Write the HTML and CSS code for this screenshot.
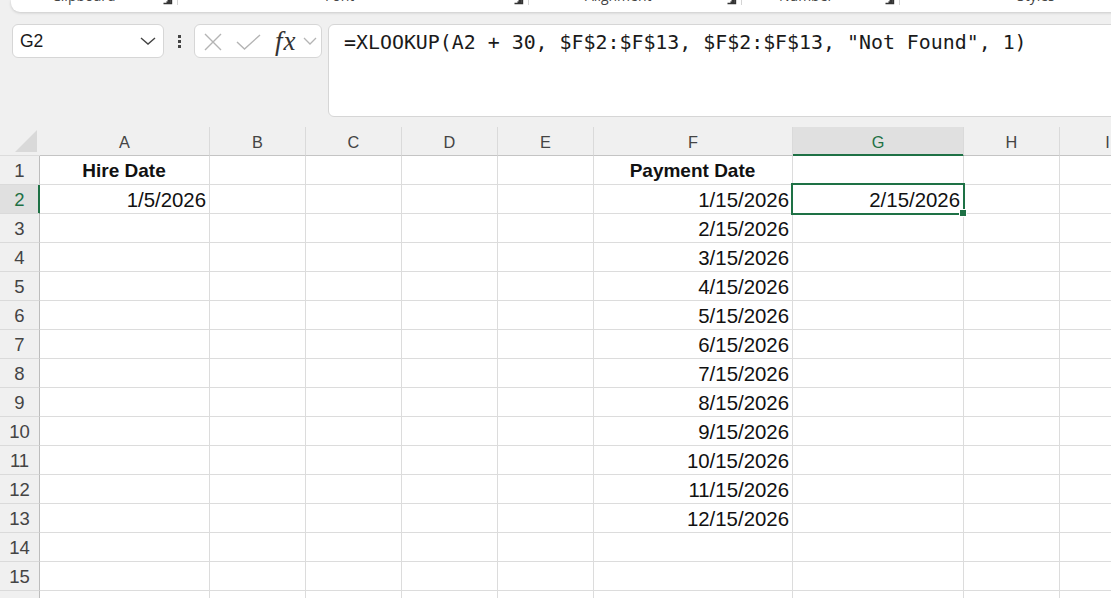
FILE: index.html
```html
<!DOCTYPE html>
<html lang="en">
<head>
<meta charset="utf-8">
<title>Workbook</title>
<link rel="stylesheet" href="styles.css">
</head>
<body>
<div class="ribbon">
  <div class="group g1"><span class="glabel">Clipboard</span><svg class="launch" viewBox="0 0 11 11"><path d="M1.5 9.5H9.5V1.5M3 3L8 8M8 4.5V8H4.5"/></svg></div>
  <div class="group g2"><span class="glabel">Font</span><svg class="launch" viewBox="0 0 11 11"><path d="M1.5 9.5H9.5V1.5M3 3L8 8M8 4.5V8H4.5"/></svg></div>
  <div class="group g3"><span class="glabel">Alignment</span><svg class="launch" viewBox="0 0 11 11"><path d="M1.5 9.5H9.5V1.5M3 3L8 8M8 4.5V8H4.5"/></svg></div>
  <div class="group g4"><span class="glabel">Number</span><svg class="launch" viewBox="0 0 11 11"><path d="M1.5 9.5H9.5V1.5M3 3L8 8M8 4.5V8H4.5"/></svg></div>
  <div class="group g5"><span class="glabel">Styles</span></div>
</div>

<div class="fbar">
  <div class="namebox">
    <span class="nb-text">G2</span>
    <svg class="nb-chev" viewBox="0 0 16 8"><path d="M1 1L8 7L15 1"/></svg>
  </div>
  <div class="more"><i></i><i></i><i></i></div>
  <div class="fnbox">
    <svg class="ic-x" viewBox="0 0 18 18"><path d="M1 1L17 17M17 1L1 17"/></svg>
    <svg class="ic-ok" viewBox="0 0 25 16"><path d="M1 8L8.5 15L24 1"/></svg>
    <span class="fx">fx</span>
    <svg class="ic-chev" viewBox="0 0 14 8"><path d="M1 1L7 7L13 1"/></svg>
  </div>
  <div class="formula">=XLOOKUP(A2 + 30, $F$2:$F$13, $F$2:$F$13, "Not Found", 1)</div>
</div>

<div class="sheet">
  <div class="corner"><svg viewBox="0 0 22 22"><path d="M22 0V22H0Z"/></svg></div>
  <div class="ch">A</div><div class="ch">B</div><div class="ch">C</div><div class="ch">D</div><div class="ch">E</div><div class="ch">F</div><div class="ch ch-sel">G</div><div class="ch">H</div><div class="ch">I</div>

  <div class="rh">1</div><div class="c b">Hire Date</div><div class="c"></div><div class="c"></div><div class="c"></div><div class="c"></div><div class="c b">Payment Date</div><div class="c"></div><div class="c"></div><div class="c"></div>
  <div class="rh rh-sel">2</div><div class="c r">1/5/2026</div><div class="c"></div><div class="c"></div><div class="c"></div><div class="c"></div><div class="c r">1/15/2026</div><div class="c r sel">2/15/2026<span class="handle"></span></div><div class="c"></div><div class="c"></div>
  <div class="rh">3</div><div class="c"></div><div class="c"></div><div class="c"></div><div class="c"></div><div class="c"></div><div class="c r">2/15/2026</div><div class="c"></div><div class="c"></div><div class="c"></div>
  <div class="rh">4</div><div class="c"></div><div class="c"></div><div class="c"></div><div class="c"></div><div class="c"></div><div class="c r">3/15/2026</div><div class="c"></div><div class="c"></div><div class="c"></div>
  <div class="rh">5</div><div class="c"></div><div class="c"></div><div class="c"></div><div class="c"></div><div class="c"></div><div class="c r">4/15/2026</div><div class="c"></div><div class="c"></div><div class="c"></div>
  <div class="rh">6</div><div class="c"></div><div class="c"></div><div class="c"></div><div class="c"></div><div class="c"></div><div class="c r">5/15/2026</div><div class="c"></div><div class="c"></div><div class="c"></div>
  <div class="rh">7</div><div class="c"></div><div class="c"></div><div class="c"></div><div class="c"></div><div class="c"></div><div class="c r">6/15/2026</div><div class="c"></div><div class="c"></div><div class="c"></div>
  <div class="rh">8</div><div class="c"></div><div class="c"></div><div class="c"></div><div class="c"></div><div class="c"></div><div class="c r">7/15/2026</div><div class="c"></div><div class="c"></div><div class="c"></div>
  <div class="rh">9</div><div class="c"></div><div class="c"></div><div class="c"></div><div class="c"></div><div class="c"></div><div class="c r">8/15/2026</div><div class="c"></div><div class="c"></div><div class="c"></div>
  <div class="rh">10</div><div class="c"></div><div class="c"></div><div class="c"></div><div class="c"></div><div class="c"></div><div class="c r">9/15/2026</div><div class="c"></div><div class="c"></div><div class="c"></div>
  <div class="rh">11</div><div class="c"></div><div class="c"></div><div class="c"></div><div class="c"></div><div class="c"></div><div class="c r">10/15/2026</div><div class="c"></div><div class="c"></div><div class="c"></div>
  <div class="rh">12</div><div class="c"></div><div class="c"></div><div class="c"></div><div class="c"></div><div class="c"></div><div class="c r">11/15/2026</div><div class="c"></div><div class="c"></div><div class="c"></div>
  <div class="rh">13</div><div class="c"></div><div class="c"></div><div class="c"></div><div class="c"></div><div class="c"></div><div class="c r">12/15/2026</div><div class="c"></div><div class="c"></div><div class="c"></div>
  <div class="rh">14</div><div class="c"></div><div class="c"></div><div class="c"></div><div class="c"></div><div class="c"></div><div class="c"></div><div class="c"></div><div class="c"></div><div class="c"></div>
  <div class="rh">15</div><div class="c"></div><div class="c"></div><div class="c"></div><div class="c"></div><div class="c"></div><div class="c"></div><div class="c"></div><div class="c"></div><div class="c"></div>
  <div class="rh">16</div><div class="c"></div><div class="c"></div><div class="c"></div><div class="c"></div><div class="c"></div><div class="c"></div><div class="c"></div><div class="c"></div><div class="c"></div>
</div>
</body>
</html>
```

FILE: styles.css
```css
html, body {
  margin: 0;
  padding: 0;
  overflow: hidden;
}
body {
  width: 1111px;
  height: 598px;
  background: #f0f0f0;
  font-family: "Liberation Sans", Arial, sans-serif;
  color: #111;
}

/* ribbon remnant */
.ribbon {
  display: flex;
  width: 1200px;
  height: 12px;
  margin-left: 11px;
  background: #fff;
  border-radius: 0 0 0 9px;
  box-shadow: 0 1px 3px rgba(0, 0, 0, 0.16);
  overflow: hidden;
}
.group {
  display: flex;
  align-items: flex-start;
  flex-shrink: 0;
  height: 5px;
  box-sizing: border-box;
  border-right: 1px solid #d4d4d4;
}
.g1 { width: 167px; }
.g2 { width: 351px; }
.g3 { width: 213px; }
.g4 { width: 158px; }
.g5 { width: 300px; border-right: 0; }
.glabel {
  font-family: "Open Sans", "Liberation Sans", sans-serif;
  font-size: 14px;
  line-height: 14px;
  margin-top: -11px;
  color: #444;
  white-space: nowrap;
}
.g1 .glabel { margin-left: 41px; }
.g2 .glabel { margin-left: 147px; }
.g3 .glabel { margin-left: 56px; }
.g4 .glabel { margin-left: 37px; }
.g5 .glabel { margin-left: 117px; }
.launch {
  width: 11px;
  height: 11px;
  margin-top: -6px;
  margin-left: auto;
  margin-right: 4px;
  fill: none;
  stroke: #333;
  stroke-width: 1.4;
}

/* formula bar */
.fbar {
  display: flex;
  align-items: flex-start;
  padding-top: 12px;
}
.namebox {
  display: flex;
  align-items: center;
  flex-shrink: 0;
  box-sizing: border-box;
  width: 152px;
  height: 34px;
  margin-left: 12px;
  padding: 0 7px 0 7px;
  background: #fff;
  border: 1px solid #d6d6d6;
  border-radius: 6px;
}
.nb-text {
  font-size: 17.5px;
  color: #1a1a1a;
}
.nb-chev {
  width: 16px;
  height: 8px;
  margin-left: auto;
  fill: none;
  stroke: #444;
  stroke-width: 1.4;
}
.more {
  display: flex;
  flex-direction: column;
  align-items: center;
  gap: 2px;
  width: 30px;
  margin-top: 11px;
  flex-shrink: 0;
}
.more i {
  display: block;
  width: 3px;
  height: 3px;
  background: #444;
}
.fnbox {
  display: flex;
  align-items: center;
  flex-shrink: 0;
  box-sizing: border-box;
  width: 128px;
  height: 34px;
  background: #fff;
  border: 1px solid #d6d6d6;
  border-radius: 6px;
}
.ic-x {
  width: 18px;
  height: 18px;
  margin-left: 9px;
  margin-top: 2px;
  fill: none;
  stroke: #b4b4b4;
  stroke-width: 1.4;
}
.ic-ok {
  width: 25px;
  height: 16px;
  margin-left: 14px;
  margin-top: 2px;
  fill: none;
  stroke: #b4b4b4;
  stroke-width: 1.4;
}
.fx {
  margin-left: 14px;
  font-family: "Liberation Serif", "DejaVu Serif", serif;
  font-style: italic;
  font-size: 27px;
  letter-spacing: 1px;
  line-height: 26px;
  color: #333;
}
.ic-chev {
  width: 14px;
  height: 8px;
  margin-left: 6px;
  fill: none;
  stroke: #b4b4b4;
  stroke-width: 1.3;
}
.formula {
  flex-shrink: 0;
  box-sizing: border-box;
  width: 820px;
  height: 93px;
  margin-left: 6px;
  padding: 6px 0 0 15px;
  background: #fff;
  border: 1px solid #d6d6d6;
  border-radius: 6px;
  font-family: "DejaVu Sans Mono", "Liberation Mono", monospace;
  font-size: 19.9px;
  line-height: 24px;
  color: #1a1a1a;
  white-space: pre;
}

/* sheet grid */
.sheet {
  display: grid;
  grid-template-columns: 40px 170px 96px 96px 96px 96px 199px 171px 96px 96px;
  grid-auto-rows: 29px;
  margin-top: 10px;
  width: 1156px;
}
.sheet > div {
  box-sizing: border-box;
}
.corner {
  display: flex;
  align-items: flex-end;
  justify-content: flex-end;
  padding: 0 3px 3px 0;
  background: #f0f0f0;
  border-bottom: 1px solid #dcdcdc;
}
.corner svg {
  width: 22px;
  height: 22px;
  fill: #d9d9d9;
}
.ch {
  padding-top: 2px;
  background: #f0f0f0;
  border-right: 1px solid #dadada;
  border-bottom: 1px solid #c4c4c4;
  font-size: 16.3px;
  line-height: 26px;
  text-align: center;
  color: #444;
}
.ch-sel {
  background: #e0e0e0;
  color: #1e7145;
  border-bottom-color: #1e7145;
  box-shadow: inset 0 -1px 0 #1e7145;
}
.rh {
  padding-top: 1px;
  background: #f0f0f0;
  border-right: 1px solid #bdbdbd;
  border-bottom: 1px solid #dadada;
  font-size: 18.5px;
  line-height: 27px;
  text-align: center;
  color: #444;
}
.rh-sel {
  background: #e0e0e0;
  color: #1e7145;
  border-right-color: #1e7145;
  box-shadow: inset -1px 0 0 #1e7145;
}
.c {
  padding: 1px 3px 0 2px;
  background: #fff;
  border-right: 1px solid #dcdcdc;
  border-bottom: 1px solid #dcdcdc;
  font-size: 20.4px;
  line-height: 27px;
  white-space: nowrap;
  color: #111;
}
.r {
  padding-top: 2px;
  text-align: right;
}
.b {
  text-align: center;
  font-weight: bold;
  font-size: 19px;
}
.sel {
  position: relative;
}
.sel::after {
  content: "";
  position: absolute;
  top: -2px;
  left: -2px;
  right: -2px;
  bottom: -2px;
  border: 2px solid #1e7145;
}
.handle {
  position: absolute;
  right: -4px;
  bottom: -4px;
  z-index: 2;
  width: 6px;
  height: 6px;
  background: #1e7145;
  border: 1px solid #fff;
}
```
